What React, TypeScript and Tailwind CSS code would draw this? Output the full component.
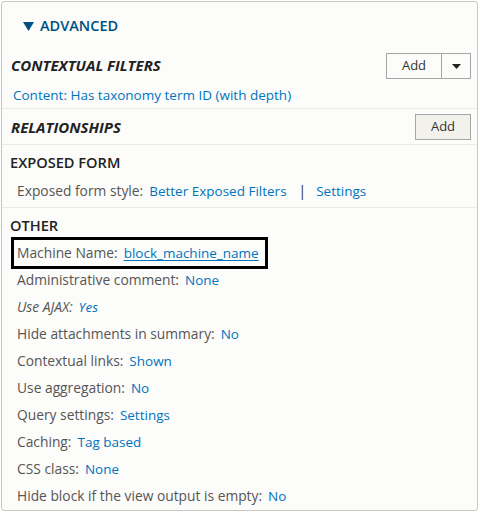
import React from "react";

const link = "text-[#0074bd] text-[13.5px]";

const rows: { label: string; value: string; italic?: boolean }[] = [
  { label: "Administrative comment:", value: "None" },
  { label: "Use AJAX:", value: "Yes", italic: true },
  { label: "Hide attachments in summary:", value: "No" },
  { label: "Contextual links:", value: "Shown" },
  { label: "Use aggregation:", value: "No" },
  { label: "Query settings:", value: "Settings" },
  { label: "Caching:", value: "Tag based" },
  { label: "CSS class:", value: "None" },
  { label: "Hide block if the view output is empty:", value: "No" },
];

function AddButton({ dropdown }: { dropdown?: boolean }) {
  if (dropdown) {
    return (
      <div className="flex h-[26px] border border-[#a6a6a6] bg-[#fcfcfa] text-[13px] text-[#333]">
        <div className="flex w-[55px] items-center justify-center border-r border-[#a6a6a6]">Add</div>
        <div className="flex w-[28px] items-center justify-center">
          <svg width="9" height="5" viewBox="0 0 9 5">
            <path d="M0 0h9L4.5 5z" fill="#222" />
          </svg>
        </div>
      </div>
    );
  }
  return (
    <div className="flex h-[26px] w-[56px] items-center justify-center border border-[#a6a6a6] bg-[#f2f1eb] text-[13px] text-[#333]">
      Add
    </div>
  );
}

export default function App() {
  return (
    <div className="h-[513px] w-[480px] bg-white p-px" style={{ fontFamily: '"Open Sans", sans-serif' }}>
      <div className="h-[510px] w-[477px] overflow-hidden rounded-[3px] border border-[#c8c8c3] bg-[#fcfcfa]">
        {/* fieldset legend */}
        <div className="flex h-[48px] items-center gap-[6px] pl-[21px] text-[14.5px] font-semibold text-[#004f80]">
          <svg width="11" height="9" viewBox="0 0 11 9">
            <path d="M0 0h11L5.5 9z" fill="#004f80" />
          </svg>
          <span>ADVANCED</span>
        </div>

        {/* contextual filters */}
        <div className="border-b border-[#ebebe6]">
          <div className="flex h-[32px] items-center justify-between pl-[9px] pr-[6px]">
            <span className="-mt-[2px] text-[15px] font-bold italic text-[#222]">CONTEXTUAL FILTERS</span>
            <AddButton dropdown />
          </div>
          <div className={`flex h-[26px] items-center pl-[11px] ${link}`}>
            Content: Has taxonomy term ID (with depth)
          </div>
        </div>

        {/* relationships */}
        <div className="flex h-[36px] items-center justify-between border-b border-[#ebebe6] pl-[9px] pr-[6px]">
          <span className="mt-[2px] text-[15px] font-bold italic text-[#222]">RELATIONSHIPS</span>
          <AddButton />
        </div>

        {/* exposed form */}
        <div className="border-b border-[#ebebe6] pb-[4px]">
          <div className="flex h-[34px] items-center pl-[8px] pt-[2px] text-[14.6px] font-semibold text-[#222]">
            EXPOSED FORM
          </div>
          <div className="flex h-[24px] items-center pl-[15px] text-[13.8px] text-[#555]">
            <span>Exposed form style:</span>
            <span className={`ml-[6px] ${link}`}>Better Exposed Filters</span>
            <span className="ml-[12px] mr-[10px] text-[#333]">|</span>
            <span className={link}>Settings</span>
          </div>
        </div>

        {/* other */}
        <div className="pl-[8px]">
          <div className="flex h-[29px] items-center pt-[7px] text-[14.6px] font-semibold text-[#222]">OTHER</div>
          <div className="ml-px flex h-[32px] w-[257px] items-center whitespace-nowrap border-[3px] border-black pl-[3px] text-[13.8px] text-[#555]">
            <span>Machine Name:</span>
            <span className={`ml-[6px] underline underline-offset-2 ${link}`}>block_machine_name</span>
          </div>
          <div className="-mt-[2px] flex flex-col pl-[7px]">
            {rows.map((r) => (
              <div
                key={r.label}
                className={`flex h-[27px] items-center whitespace-nowrap text-[13.8px] text-[#555] ${r.italic ? "italic" : ""}`}
              >
                <span>{r.label}</span>
                <span className={`ml-[6px] ${link}`}>{r.value}</span>
              </div>
            ))}
          </div>
        </div>
      </div>
    </div>
  );
}
